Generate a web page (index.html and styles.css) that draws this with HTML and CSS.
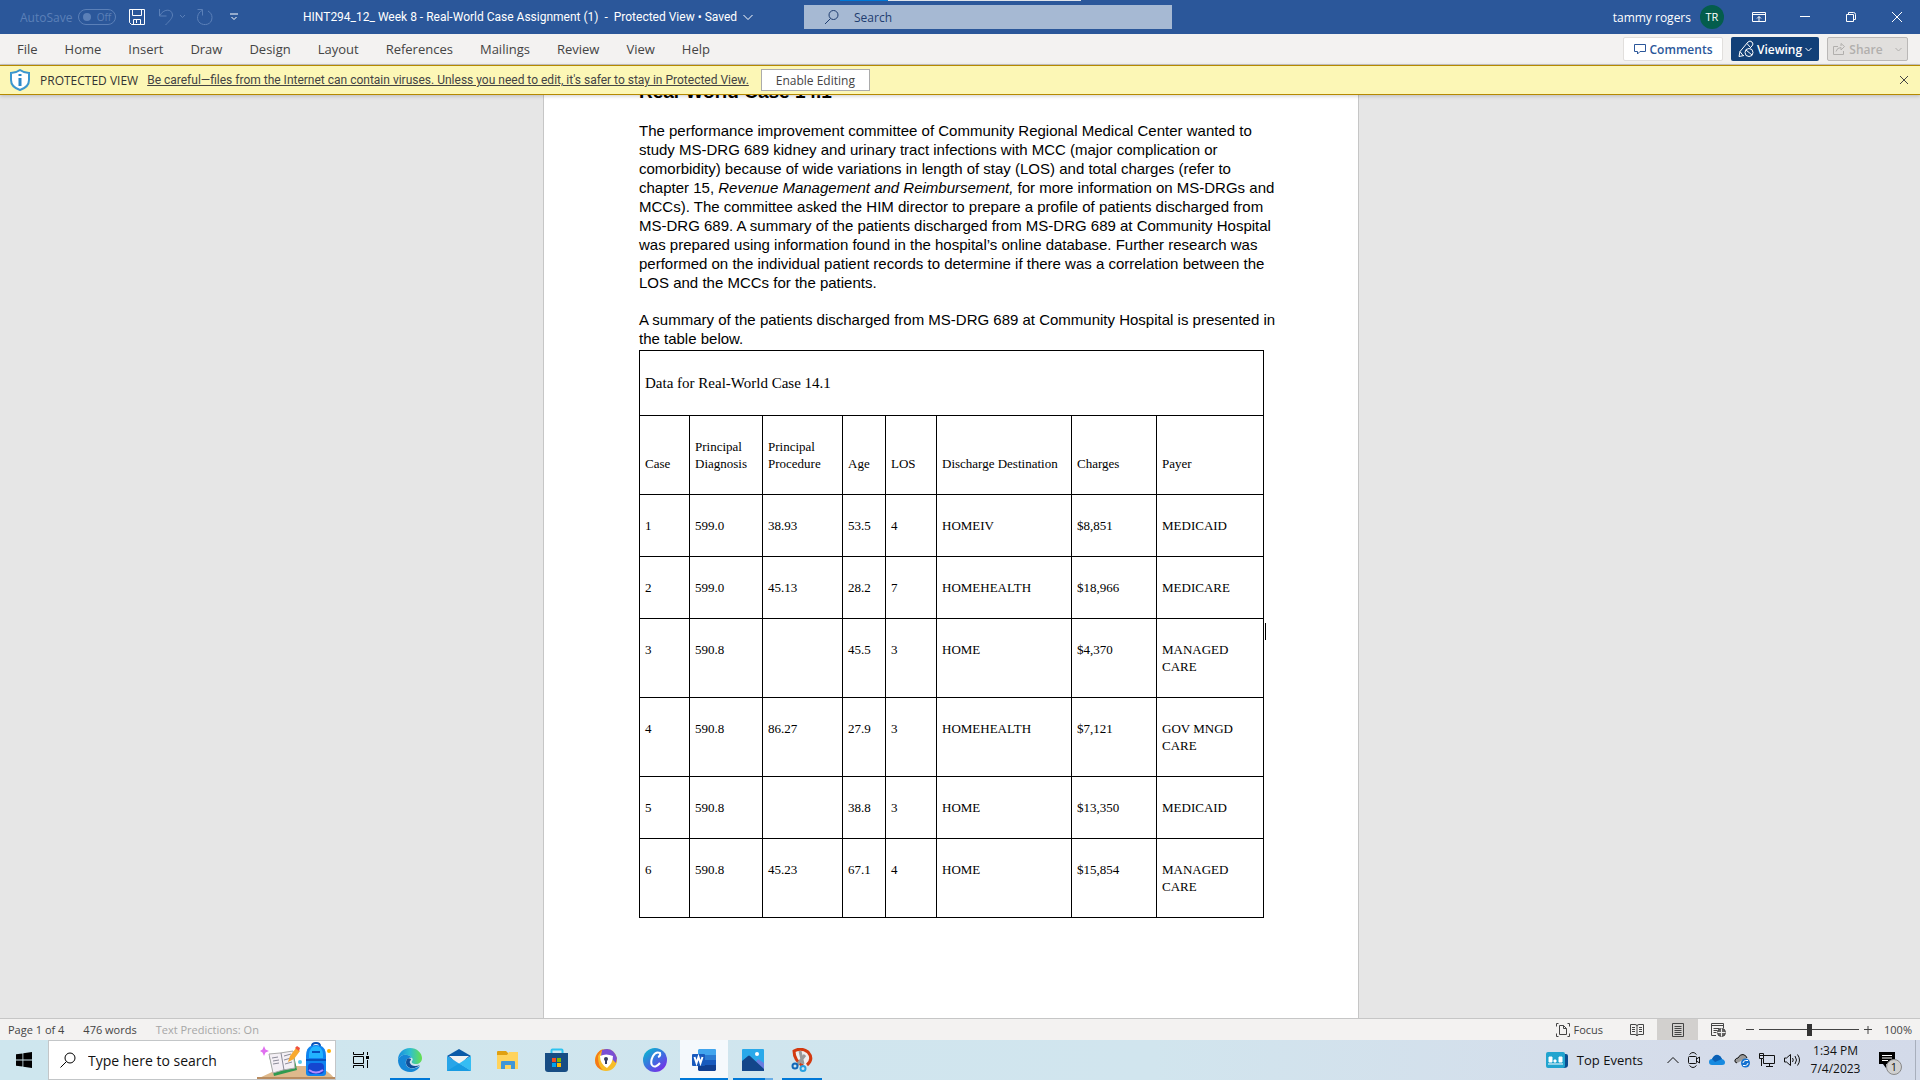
FILE: index.html
```
<!DOCTYPE html>
<html lang="en">
<head>
  <meta charset="utf-8">
  <title>HINT294_12_ Week 8 - Real-World Case Assignment (1)</title>
  <link rel="stylesheet" href="styles.css">
</head>
<body>
  <header class="titlebar">
    <div class="quick">
      <span class="autosave">AutoSave</span>
      <button class="toggle" disabled><i></i>Off</button>
      <button class="tool save" aria-label="Save"><svg width="18" height="18" viewBox="0 0 18 18"><path d="M1.500 1.500h15v15h-13l-2-2zM4.500 1.500v6h9v-6M5.500 16.500v-5h7v5M8.500 12v3"/></svg></button>
      <button class="tool undo" aria-label="Undo" disabled><svg width="28" height="18" viewBox="0 0 28 18"><path d="M1.500 1v7h7M2 7.500C5 1 14 0 14.500 7c0 3-3 6-7 10M22 7l2.500 2.500L27 7"/></svg></button>
      <button class="tool redo" aria-label="Redo" disabled><svg width="18" height="18" viewBox="0 0 18 18"><path d="M1.500 1.500h5v6M6 2.500C1 5 0 12 4 15s12 2 12-5.500c0-3-1.500-5-4-6.500"/></svg></button>
      <button class="tool" aria-label="Customize Quick Access Toolbar"><svg width="8" height="8" viewBox="0 0 8 8"><path d="M0 1h8M1.500 4L4 6.500 6.500 4"/></svg></button>
    </div>
    <div class="docname">
      <span>HINT294_12_ Week 8 - Real-World Case Assignment (1) &nbsp;-&nbsp; Protected View • Saved</span>
      <svg width="10" height="7" viewBox="0 0 10 7"><path d="M.5 1L5 5.500 9.500 1"/></svg>
    </div>
    <div class="searchbox">
      <svg width="16" height="16" viewBox="0 0 16 16"><circle cx="9.500" cy="6" r="4.500"/><path d="M6.500 9.500L1 15"/></svg>
      <input type="text" placeholder="Search" aria-label="Search">
    </div>
    <div class="account">
      <span>tammy rogers</span>
      <span class="avatar">TR</span>
    </div>
    <div class="winbtns">
      <button aria-label="Ribbon Display Options"><svg width="14" height="12" viewBox="0 0 14 12"><path d="M.5 1.500h13v9H.5zM.5 3.500h13M7 10V5.500M5 7.500l2-2 2 2"/></svg></button>
      <button aria-label="Minimize"><svg width="10" height="12" viewBox="0 0 10 12"><path d="M0 5.500h10"/></svg></button>
      <button aria-label="Restore"><svg width="10" height="12" viewBox="0 0 10 12"><path d="M.5 3.500h7v7h-7zM2.500 3V1.500h5q2 0 2 2v5H8"/></svg></button>
      <button aria-label="Close"><svg width="10" height="12" viewBox="0 0 10 12"><path d="M0 1l10 10M10 1L0 11"/></svg></button>
    </div>
    <div class="sharing-strip"></div>
  </header>

  <nav class="ribbon">
    <div class="tabs">
      <a href="#">File</a>
      <a href="#">Home</a>
      <a href="#">Insert</a>
      <a href="#">Draw</a>
      <a href="#">Design</a>
      <a href="#">Layout</a>
      <a href="#">References</a>
      <a href="#">Mailings</a>
      <a href="#">Review</a>
      <a href="#">View</a>
      <a href="#">Help</a>
    </div>
    <div class="ribbon-right">
      <button class="comments"><svg width="12" height="12" viewBox="0 0 12 12"><path d="M.5 1.500h11v7H6L3.500 11V8.500h-3z"/></svg>Comments</button>
      <button class="viewing"><svg width="16" height="18" viewBox="0 0 16 18"><path d="M1 16.500l1-5L10 2q2-2 4 0t0 4l-2 2M1 16.500l5-1M9 3.500l3 3.500M2 11.500l3 4"/><circle cx="11" cy="12.500" r="4"/><path d="M8 10l6 5"/></svg>Viewing<svg width="7" height="5" viewBox="0 0 7 5"><path d="M.5 1l3 3 3-3"/></svg></button>
      <button class="share" disabled><svg width="12" height="12" viewBox="0 0 12 12"><path d="M5 3.500H.5v8h10V8M3 8.500q1-4 5-4V7l3.500-3.500L8 .5V3"/></svg>Share<svg width="7" height="5" viewBox="0 0 7 5"><path d="M.5 1l3 3 3-3"/></svg></button>
    </div>
  </nav>

  <div class="notice">
    <svg class="shield" width="20" height="22" viewBox="0 0 20 22"><path d="M10 1q4 3 9 3v7q0 7-9 10Q1 18 1 11V4q5 0 9-3z" fill="#fff" stroke="#3a96cf" stroke-width="2"/><path d="M10 5v2M10 9v8" stroke="#2b88c8" stroke-width="3"/></svg>
    <strong>PROTECTED VIEW</strong>
    <a href="#">Be careful—files from the Internet can contain viruses. Unless you need to edit, it's safer to stay in Protected View.</a>
    <button class="enable">Enable Editing</button>
    <button class="dismiss" aria-label="Close this message"><svg width="10" height="10" viewBox="0 0 10 10"><path d="M1 1l8 8M9 1L1 9"/></svg></button>
  </div>

  <main class="canvas">
    <article class="page">
      <h1>Real-World Case 14.1</h1>
      <p>The performance improvement committee of Community Regional Medical Center wanted to<br>
      study MS-DRG 689 kidney and urinary tract infections with MCC (major complication or<br>
      comorbidity) because of wide variations in length of stay (LOS) and total charges (refer to<br>
      chapter 15, <em>Revenue Management and Reimbursement,</em> for more information on MS-DRGs and<br>
      MCCs). The committee asked the HIM director to prepare a profile of patients discharged from<br>
      MS-DRG 689. A summary of the patients discharged from MS-DRG 689 at Community Hospital<br>
      was prepared using information found in the hospital’s online database. Further research was<br>
      performed on the individual patient records to determine if there was a correlation between the<br>
      LOS and the MCCs for the patients.</p>
      <p>A summary of the patients discharged from MS-DRG 689 at Community Hospital is presented in<br>
      the table below.</p>
      <div class="tablewrap">
        <table>
          <colgroup>
            <col class="c-case"><col class="c-diag"><col class="c-proc"><col class="c-age">
            <col class="c-los"><col class="c-dest"><col class="c-chg"><col class="c-payer">
          </colgroup>
          <thead>
            <tr><th class="caption" colspan="8">Data for Real-World Case 14.1</th></tr>
            <tr><th>Case</th><th>Principal Diagnosis</th><th>Principal Procedure</th><th>Age</th><th>LOS</th><th>Discharge Destination</th><th>Charges</th><th>Payer</th></tr>
          </thead>
          <tbody>
            <tr><td>1</td><td>599.0</td><td>38.93</td><td>53.5</td><td>4</td><td>HOMEIV</td><td>$8,851</td><td>MEDICAID</td></tr>
            <tr><td>2</td><td>599.0</td><td>45.13</td><td>28.2</td><td>7</td><td>HOMEHEALTH</td><td>$18,966</td><td>MEDICARE</td></tr>
            <tr><td>3</td><td>590.8</td><td></td><td>45.5</td><td>3</td><td>HOME</td><td>$4,370</td><td>MANAGED<br>CARE</td></tr>
            <tr><td>4</td><td>590.8</td><td>86.27</td><td>27.9</td><td>3</td><td>HOMEHEALTH</td><td>$7,121</td><td>GOV MNGD<br>CARE</td></tr>
            <tr><td>5</td><td>590.8</td><td></td><td>38.8</td><td>3</td><td>HOME</td><td>$13,350</td><td>MEDICAID</td></tr>
            <tr><td>6</td><td>590.8</td><td>45.23</td><td>67.1</td><td>4</td><td>HOME</td><td>$15,854</td><td>MANAGED<br>CARE</td></tr>
          </tbody>
        </table>
        <span class="caret"></span>
      </div>
    </article>
  </main>

  <footer class="statusbar">
    <span>Page 1 of 4</span>
    <span>476 words</span>
    <span class="muted">Text Predictions: On</span>
    <button class="focus"><svg width="14" height="14" viewBox="0 0 14 14"><path d="M.5 3.500v-3h2M11.500.5h2v3M.5 10.500v3h2M11.500 13.500h2v-3M3.500 2.500h4l3 3v6h-7zM7.500 2.500v3h3"/></svg>Focus</button>
    <div class="views">
      <button aria-label="Read Mode"><svg width="14" height="14" viewBox="0 0 14 14"><path d="M.5 1.500H5q2 0 2 1.500 0-1.500 2-1.500h4.500v10H9q-2 0-2 1.500 0-1.500-2-1.500H.5zM7 3v10M2 4.500h3M2 6.500h3M2 8.500h3M9 4.500h3M9 6.500h3M9 8.500h3"/></svg></button>
      <button class="active" aria-label="Print Layout"><svg width="12" height="14" viewBox="0 0 12 14"><path d="M.5.5h11v13H.5zM2.500 3.500h7M2.500 5.500h7M2.500 7.500h7M2.500 9.500h7M2.500 11.500h7"/></svg></button>
      <button aria-label="Web Layout"><svg width="15" height="14" viewBox="0 0 15 14"><path d="M5 12.500H.5V.5h12v5M.5 2.500h12M2.500 5.500h6M2.500 7.500h4M2.500 9.500h3"/><circle cx="10.500" cy="9.500" r="4" fill="#666"/><path d="M6.500 9.500h8M10.500 5.500v8" stroke="#eee"/></svg></button>
    </div>
    <div class="zoom">
      <button aria-label="Zoom Out"><svg width="8" height="8" viewBox="0 0 8 8"><path d="M0 3.500h8"/></svg></button>
      <input type="range" min="0" max="100" value="50" aria-label="Zoom">
      <button aria-label="Zoom In"><svg width="8" height="8" viewBox="0 0 8 8"><path d="M0 3.500h8M4 0v8"/></svg></button>
      <span>100%</span>
    </div>
  </footer>

  <div class="taskbar">
    <button class="start" aria-label="Start"><svg width="16" height="16" viewBox="0 0 16 16"><path d="M0 2.300L6.500 1.400V7.600H0zM7.300 1.300L16 0v7.600H7.300zM0 8.400h6.500v6.200L0 13.700zM7.300 8.400H16V16l-8.700-1.300z"/></svg></button>
    <div class="tb-search">
      <svg class="glass" width="16" height="16" viewBox="0 0 16 16"><circle cx="10" cy="6" r="5"/><path d="M6.500 9.500L.5 15.500"/></svg>
      <input type="text" placeholder="Type here to search" aria-label="Type here to search">
      <svg width="78" height="38" viewBox="0 0 78 38">
        <path d="M0 38L28 25H60Q72 30 78 38z" fill="#deb98c"/>
        <path d="M0 36h78v2H0z" fill="#b98c60"/>
        <path d="M7 5l1.500 3.500L12 10 8.500 11.500 7 15l-1.500-3.500L3 10l2.500-1.500z" fill="#e070f0"/>
        <path d="M12 15l24-5 4 19-23 6z" fill="#2f9a4f"/>
        <path d="M12 13l11-1 13-2 2 17-12 2-10 3z" fill="#f4f0f5" stroke="#aaa"/>
        <path d="M24 12l3 17M15 17l6-1M16 20l6-1M16 23l6-1M27 15l7-2M27 19l7-2M28 23l7-2" stroke="#8b8b98" fill="none"/>
        <path d="M31 21l2-6 6-8 4 3-6 8z" fill="#f8a92e"/><path d="M38 7l2-2 3 2-1 3z" fill="#f0503c"/>
        <circle cx="43" cy="21" r="2" fill="#58c8ea"/><circle cx="72" cy="10" r="2" fill="#ffb000"/>
        <path d="M55 5q0-3 4-3t4 3" fill="none" stroke="#0852b8" stroke-width="2"/>
        <path d="M49 15q0-11 10-11t10 11v17q0 3-3 3H52q-3 0-3-3z" fill="#0f83ef"/>
        <path d="M52 13q1-8 7-8t7 8v4H52z" fill="#22b4ff"/>
        <path d="M49 19h20M55 11h8" stroke="#0752be" stroke-width="2"/>
        <rect x="51" y="22" width="16" height="11" rx="4" fill="#1546d0"/><path d="M52 29q7 5 14 0" fill="none" stroke="#b48bff" stroke-width="2"/>
      </svg>
    </div>
    <div class="apps">
      <button aria-label="Task View"><svg width="16" height="16" viewBox="0 0 16 16" fill="none" stroke="#000"><path d="M.5 0v2.500h10V0M.5 4.500h10v7H.5zM.5 16v-2.500h10V16M14.500 0v3M14.500 8v8"/><path d="M13 4h3v3h-3z" fill="#000" stroke="none"/></svg></button>
      <button class="running" aria-label="Microsoft Edge"><svg width="24" height="24" viewBox="0 0 24 24">
        <defs><linearGradient id="eg" x2="1"><stop stop-color="#168ddf"/><stop offset=".5" stop-color="#2fbfd0"/><stop offset="1" stop-color="#66e04c"/></linearGradient></defs>
        <path d="M0 12C0 5 5 0 12 0s12 5 12 10c0 4-3 6-6 6-3 0-5-1-4-3 1-1 1-2 0-3C10 5 2 6 0 12z" fill="url(#eg)"/>
        <path d="M0 12c2-6 10-7 14-2-4-1-7 2-6 6 1 5 8 6 14 2-2 4-6 6-10 6C5 24 0 19 0 12z" fill="#1687d6"/>
        <path d="M9 11c-3 5 1 12 10 8l3-2c-5 2-9 1-10-2-1-2 1-2 1-4-2-1-3-1-4 0z" fill="#104f99"/>
      </svg></button>
      <button aria-label="Mail"><svg width="24" height="24" viewBox="0 0 24 24"><path d="M0 8L12 1l12 7-12 8z" fill="#0b5aa8"/><path d="M2 8h20l-10 9z" fill="#f2f2f2"/><path d="M0 8l24 15H0z" fill="#28a5e8"/><path d="M24 8v15L12 15.500z" fill="#35bdf3"/><path d="M0 23h24L12 15.500z" fill="#179be2"/></svg></button>
      <button aria-label="File Explorer"><svg width="24" height="24" viewBox="0 0 24 24"><path d="M1 4q0-1 1-1h8l2 2v3H1z" fill="#e0a010"/><path d="M1 7h10l2-3h9v17H1z" fill="#ffd35c"/><path d="M5 21v-7q0-1 1-1h12q1 0 1 1v7h-4v-4H9v4z" fill="#3f96d8"/></svg></button>
      <button aria-label="Microsoft Store"><svg width="24" height="24" viewBox="0 0 24 24"><path d="M6.500 6V2.500q0-1 1-1h9q1 0 1 1V6" fill="none" stroke="#2cc3f0" stroke-width="2"/><path d="M0 5h23v16q0 3-3 3H3q-3 0-3-3z" fill="#174d84"/><path d="M7 10h4v4H7z" fill="#f25022"/><path d="M12 10h4v4h-4z" fill="#7fba00"/><path d="M7 15h4v4H7z" fill="#00a4ef"/><path d="M12 15h4v4h-4z" fill="#ffb900"/></svg></button>
      <button aria-label="Secure Browser"><svg width="24" height="24" viewBox="0 0 24 24"><circle cx="12" cy="12" r="11" fill="#f7bd28"/><path d="M8 2q11-4 15 8l-1 5-7-7H7z" fill="#7a4fd4"/><path d="M9 1L4 8q0 11 5 14Q1 20 1 12 2 4 9 1z" fill="#f57a18"/><path d="M6 8q6-3 13 0 0 7-6 12Q6 16 6 8z" fill="#fff"/><circle cx="12" cy="11" r="2" fill="#333c5c"/><path d="M11 12h2v4h-2z" fill="#333c5c"/></svg></button>
      <button aria-label="Canva"><svg width="24" height="24" viewBox="0 0 24 24"><defs><linearGradient id="cg" x2=".8" y2="1"><stop stop-color="#00c4cc"/><stop offset=".55" stop-color="#3d6fe0"/><stop offset="1" stop-color="#7d2ae8"/></linearGradient></defs><circle cx="12" cy="12" r="12" fill="url(#cg)"/><path d="M15 9q3-1 2-4-4-2-7 3-3 6-1 9 3 4 8-2" fill="none" stroke="#fff" stroke-width="2"/></svg></button>
      <button class="current" aria-label="Word"><svg width="24" height="24" viewBox="0 0 24 24"><path d="M7 1h16q1 0 1 1v5H6V2z" fill="#41a5ee"/><path d="M6 7h18v5H6z" fill="#2b7cd3"/><path d="M6 12h18v5H6z" fill="#185abd"/><path d="M6 17h18v5l-1 1H7l-1-1z" fill="#103f91"/><rect y="6" width="13" height="12" rx="1" fill="#185abd"/><path d="M2.500 9l2 6 2-6 2 6 2-6" fill="none" stroke="#fff" stroke-width="2"/></svg></button>
      <button class="running stacked" aria-label="Photos"><svg width="24" height="24" viewBox="0 0 24 24"><rect x="1" y="1" width="22" height="22" rx="1" fill="#29a9ea"/><path d="M12 18l5-7 6 4v8H12z" fill="#6a7ee0"/><path d="M1 13l6-5q1-1 2 0l14 13v2H1z" fill="#13468a"/><circle cx="16" cy="6" r="2" fill="#fff"/></svg></button>
      <button class="running" aria-label="Snipping Tool"><svg width="24" height="24" viewBox="0 0 24 24"><path d="M13 18Q4 12 4 3q7-4 14 1 6 7-1 13" fill="#eee" stroke="#d33a10" stroke-width="3"/><path d="M10 3l3 13M15 7l-8 10" stroke="#999" stroke-width="3"/><circle cx="5" cy="18" r="2.500" fill="none" stroke="#1268b8" stroke-width="2"/><circle cx="13" cy="20.500" r="2.500" fill="none" stroke="#28a0e0" stroke-width="2"/></svg></button>
    </div>
    <div class="tray">
      <button class="events"><svg width="22" height="16" viewBox="0 0 22 16"><path d="M12 2h8q2 0 2 2v9q0 3-4 3h-6z" fill="#0b4e91"/><rect width="19" height="16" rx="2" fill="#21a4cf"/><path d="M3 5v5h3V5zM8 8v2h2V8zM13 5v5h3V5zM2 12h15" fill="#fff" stroke="#fff"/></svg>Top Events</button>
      <div class="tray-icons">
        <svg width="12" height="16" viewBox="0 0 12 16"><path d="M.5 11L6 5.500 11.500 11"/></svg>
        <svg width="12" height="16" viewBox="0 0 12 16"><path d="M1.500 4.500h6q1 0 1 1v5q0 1-1 1h-6q-1 0-1-1v-5q0-1 1-1zM8.500 7l3-2v6l-3-2M1.500 2.500q3.500-4 7 0M1.500 13.500q3.500 4 7 0"/></svg>
        <svg width="16" height="16" viewBox="0 0 16 16"><path d="M3 13q-3 0-3-3t3-3q2-4 5-4t5 4q3 1 3 3.500T13 13z" fill="#178ae0" stroke="none"/><path d="M3 7q3-5 6-4t4 4l-7 3z" fill="#0a5fb5" stroke="none"/></svg>
        <svg width="16" height="16" viewBox="0 0 16 16"><path d="M3 11q-3-1-2-3t3-2q2-4 5-3.500T13 6" fill="#999"/><circle cx="11.500" cy="11" r="4.500" fill="#1572d0" stroke="none"/><path d="M9 11q0-2 2.500-2.500H14M14 11q0 2-2.500 2.500H9" stroke="#fff"/></svg>
        <svg width="16" height="16" viewBox="0 0 16 16"><path d="M5 3.500h10.500v8h-11V7M7 14.500h7M10.500 12v2M.5 1.500h4v5h-4zM1 3.500h3M2.500 7v7"/></svg>
        <svg width="16" height="16" viewBox="0 0 16 16"><path d="M.5 6v4h2l4 3.500v-11L2.500 6zM8.500 6q1.500 2 0 4M11 4q3 4 0 8M13.500 2.500q4 5.500 0 11"/></svg>
      </div>
      <div class="clock"><span>1:34 PM</span><span>7/4/2023</span></div>
      <button class="alerts" aria-label="Notifications"><svg width="16" height="16" viewBox="0 0 16 16"><path d="M0 0h16v12H7v4l-3-4H0z"/><path d="M3 3.500h10M3 6h10M3 8.500h6" stroke="#fff"/></svg><b>1</b></button>
    </div>
  </div>
</body>
</html>
```
FILE: styles.css
```
* {
  box-sizing: border-box;
}

html, body {
  height: 100%;
}

body {
  margin: 0;
  display: flex;
  flex-direction: column;
  overflow: hidden;
  font-family: "Open Sans", "Noto Sans", sans-serif;
  font-size: 12px;
  color: #444;
  background: #e6e6e6;
}

button, input {
  font: inherit;
  color: inherit;
  border: 0;
  padding: 0;
  background: none;
}

button {
  display: flex;
  align-items: center;
  justify-content: center;
}

a {
  color: inherit;
  text-decoration: none;
}

svg {
  display: block;
  flex: none;
}

/* title bar */
.titlebar {
  position: relative;
  flex: none;
  display: flex;
  align-items: center;
  height: 34px;
  color: #fff;
  background: #2b579a;
}

.titlebar svg {
  fill: none;
  stroke: currentColor;
}

.quick {
  display: flex;
  align-items: center;
  width: 303px;
  padding-left: 20px;
}

.autosave {
  width: 58px;
  color: #5b80b8;
}

.toggle {
  width: 38px;
  height: 16px;
  gap: 6px;
  margin-right: 12px;
  border: 1px solid #5b80b8;
  border-radius: 8px;
  font-size: 10px;
  color: #5b80b8;
}

.toggle i {
  width: 8px;
  height: 8px;
  border-radius: 50%;
  background: #5b80b8;
}

.tool:disabled {
  color: #5b80b8;
}

.save {
  margin-right: 12px;
}

.undo {
  margin-right: 10px;
}

.redo {
  margin-right: 16px;
}

.docname {
  display: flex;
  align-items: center;
  gap: 6px;
  width: 501px;
  white-space: nowrap;
  font-family: Roboto, "Open Sans", sans-serif;
}

.searchbox {
  display: flex;
  align-items: center;
  gap: 14px;
  width: 368px;
  height: 24px;
  padding-left: 20px;
  color: #1f3d70;
  background: #a6b9d3;
}

.searchbox input {
  flex: 1;
}

input::placeholder {
  color: inherit;
  opacity: 1;
}

.account {
  display: flex;
  align-items: center;
  gap: 9px;
  margin-left: auto;
  margin-right: 12px;
}

.avatar {
  width: 24px;
  height: 24px;
  border-radius: 50%;
  line-height: 24px;
  text-align: center;
  font-size: 11px;
  background: #045d4c;
}

.winbtns {
  display: flex;
}

.winbtns button {
  width: 46px;
  height: 32px;
}

.sharing-strip {
  position: absolute;
  top: 0;
  left: 840px;
  width: 241px;
  height: 1px;
  background: linear-gradient(to right, #0078d7 48px, #dfe3ea 48px);
}

/* ribbon */
.ribbon {
  flex: none;
  display: flex;
  align-items: center;
  height: 31px;
  padding: 0 12px 0 17px;
  border-bottom: 1px solid #c8c6c4;
  background: #f3f2f1;
}

.tabs {
  display: flex;
  gap: 27px;
  font-size: 13px;
}

.ribbon-right {
  display: flex;
  gap: 8px;
  margin-left: auto;
  font-size: 12px;
  font-weight: 600;
}

.ribbon-right button {
  height: 24px;
  gap: 4px;
  border-radius: 2px;
}

.ribbon-right svg {
  fill: none;
  stroke: currentColor;
}

.ribbon-right .comments {
  width: 100px;
  color: #2b579a;
  background: #fff;
  border: 1px solid #e1dfdd;
}

.ribbon-right .viewing {
  width: 88px;
  gap: 3px;
  color: #fff;
  background: #124078;
}

.ribbon-right .share {
  width: 81px;
  color: #b1afad;
  background: #e1dfdd;
  border: 1px solid #bab8b7;
}

.share svg:last-child {
  margin-left: 8px;
}

/* protected view message */
.notice {
  position: relative;
  z-index: 1;
  flex: none;
  display: flex;
  align-items: center;
  height: 30px;
  padding: 0 11px 0 10px;
  border: 1px solid #b58900;
  border-width: 1px 0;
  background: #fcf7b6;
  box-shadow: 0 1px 4px rgba(0, 0, 0, .2);
}

.notice strong {
  margin: 0 9px 0 10px;
  font-weight: 400;
  color: #333;
}

.notice a {
  text-decoration: underline;
  font-family: Roboto, "Open Sans", sans-serif;
}

.enable {
  width: 109px;
  height: 22px;
  margin-left: 12px;
  border: 1px solid #ababab;
  background: #fff;
}

.dismiss {
  margin-left: auto;
  stroke: #444;
}

/* document */
.canvas {
  flex: 1;
  min-height: 0;
  overflow: hidden;
  padding-right: 18px;
}

.page {
  width: 816px;
  min-height: 1056px;
  margin: -112px auto 0;
  padding: 96px 94px 96px 95px;
  border: 1px solid #c6c6c6;
  color: #000;
  background: #fff;
  font-family: "Liberation Sans", Arial, sans-serif;
  font-size: 15px;
  line-height: 19px;
}

.page h1 {
  margin: 0 0 17px;
  font-size: 19px;
  line-height: 24px;
}

.page p {
  margin: 0 0 18px;
  white-space: nowrap;
}

.page p + p {
  margin-bottom: 2px;
}

.tablewrap {
  position: relative;
}

table {
  width: 100%;
  table-layout: fixed;
  border-collapse: collapse;
  font-family: "Liberation Serif", "Times New Roman", serif;
  font-size: 13px;
  line-height: 17px;
}

th, td {
  padding: 22px 5px;
  border: 1px solid #000;
  text-align: left;
  vertical-align: top;
  font-weight: 400;
}

th {
  vertical-align: bottom;
}

.caption {
  font-size: 15px;
  line-height: 20px;
}

.c-case { width: 50px; }
.c-diag { width: 73px; }
.c-proc { width: 80px; }
.c-age { width: 43px; }
.c-los { width: 51px; }
.c-dest { width: 135px; }
.c-chg { width: 85px; }

.caret {
  position: absolute;
  right: -2px;
  top: 273px;
  width: 1px;
  height: 17px;
  background: #000;
}

/* status bar */
.statusbar {
  flex: none;
  display: flex;
  align-items: center;
  gap: 19px;
  height: 22px;
  padding: 0 8px;
  border-top: 1px solid #c6c6c6;
  background: #f3f2f1;
  font-size: 11px;
}

.statusbar svg {
  fill: none;
  stroke: #444;
}

.muted {
  color: #a6a6a6;
}

.focus {
  gap: 3px;
  margin-left: auto;
}

.views {
  display: flex;
  align-self: stretch;
  margin-right: -12px;
  margin-left: -6px;
}

.views button {
  width: 41px;
}

.views .active {
  background: #d2d0ce;
}

.zoom {
  display: flex;
  align-items: center;
  gap: 5px;
}

.zoom input {
  appearance: none;
  width: 100px;
  height: 12px;
  margin: 0;
  background: linear-gradient(#444, #444) center / 100% 1px no-repeat;
}

.zoom input::-webkit-slider-thumb {
  appearance: none;
  width: 5px;
  height: 12px;
  background: #333;
}

.zoom span {
  margin-left: 7px;
}

/* taskbar */
.taskbar {
  flex: none;
  display: flex;
  height: 40px;
  color: #111;
  background: linear-gradient(to right, #cee6ee, #d1e5ee 60%, #d5dcea 88%, #d3dae9);
}

.start {
  width: 48px;
}

.tb-search {
  display: flex;
  align-items: center;
  gap: 12px;
  width: 288px;
  padding-left: 11px;
  border: 1px solid #c3c6c8;
  background: #fff;
}

.tb-search input {
  flex: 1;
  min-width: 0;
  font-size: 14px;
}

.tb-search .glass {
  fill: none;
  stroke: #000;
}

.tb-search svg:last-child {
  margin-left: -12px;
}

.apps {
  display: flex;
  gap: 1px;
  margin-left: 1px;
}

.apps button {
  width: 48px;
}

.running {
  background: linear-gradient(#0078d7, #0078d7) center bottom / 40px 2px no-repeat;
}

.stacked {
  background: linear-gradient(to right, #0078d7 32px, #6aaee6 32px) center bottom / 40px 2px no-repeat;
}

.current {
  background: linear-gradient(#0078d7, #0078d7) bottom / 100% 2px no-repeat #f5f9fc;
}

.tray {
  display: flex;
  align-items: center;
  margin-left: auto;
  margin-right: 4px;
  border-right: 1px solid #a8afbc;
}

.events {
  gap: 9px;
  margin-right: 24px;
  font-size: 13px;
}

.tray-icons {
  display: flex;
  gap: 9px;
}

.tray-icons svg {
  fill: none;
  stroke: #111;
}

.clock {
  display: flex;
  flex-direction: column;
  width: 71px;
  text-align: center;
  line-height: 18px;
}

.alerts {
  position: relative;
  width: 44px;
  height: 40px;
  padding-right: 12px;
}

.alerts b {
  position: absolute;
  left: 15px;
  top: 19px;
  width: 16px;
  height: 16px;
  border: 1px solid #888;
  border-radius: 50%;
  line-height: 14px;
  font-size: 11px;
  font-weight: 400;
  background: #d0d0d0;
}
```
